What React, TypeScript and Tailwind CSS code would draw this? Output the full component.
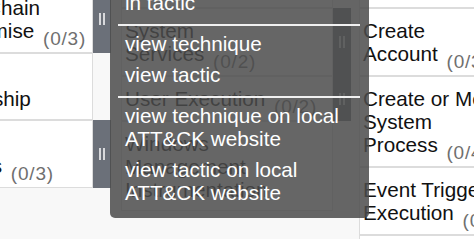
import React from "react";

type Technique = {
  name: string;
  count?: string;
  sub?: boolean;
};

type Column = {
  width: string;
  offset: string;
  items: Technique[];
};

const columns: Column[] = [
  {
    width: "w-[180px]",
    offset: "mt-[-15px]",
    items: [
      { name: "Supply Chain Compromise", count: "(0/3)", sub: true },
      { name: "Trusted Relationship" },
      { name: "Valid Accounts", count: "(0/3)", sub: true },
    ],
  },
  {
    width: "w-[212px]",
    offset: "mt-[-59px] ml-[10px]",
    items: [
      { name: "Software Deployment Tools" },
      { name: "System Services", count: "(0/2)", sub: true },
      { name: "User Execution", count: "(0/2)", sub: true },
      { name: "Windows Management Instrumentation" },
    ],
  },
  {
    width: "w-[191px]",
    offset: "mt-[-59px] ml-[8px]",
    items: [
      { name: "Compromise Client Software Binary" },
      { name: "Create Account", count: "(0/3)", sub: true },
      { name: "Create or Modify System Process", count: "(0/4)", sub: true },
      { name: "Event Triggered Execution", count: "(0/15)", sub: true },
      { name: "External Remote Services" },
    ],
  },
];

function Name({ name, count }: { name: string; count?: string }) {
  if (!count) return <>{name}</>;
  // keep the last word and the count together, as the matrix does
  const i = name.lastIndexOf(" ");
  const head = name.slice(0, i + 1);
  const last = name.slice(i + 1);
  return (
    <>
      {head}
      <span className="whitespace-nowrap">
        {last}{" "}
        <span className="relative top-[7px] ml-[3px] text-[19px] tracking-[0.8px] text-[#6f6f6f]">
          {count}
        </span>
      </span>
    </>
  );
}

function Sidebar() {
  return (
    <div className="flex w-[18px] items-center justify-center gap-[2px] bg-[#6b7079]">
      <span className="h-[12px] w-[2px] bg-[#d8d9dc]" />
      <span className="h-[12px] w-[2px] bg-[#d8d9dc]" />
    </div>
  );
}

function TechniqueCell({ t, width }: { t: Technique; width: string }) {
  return (
    <div className="flex">
      <div
        className={`${width} border border-[#dcdcdc] bg-white py-[9.5px] pl-[3px] pr-[6px] text-[20.7px] leading-[23px] text-[#111]`}
      >
        <Name name={t.name} count={t.count} />
      </div>
      {t.sub ? <Sidebar /> : <div className="w-[18px]" />}
    </div>
  );
}

const menu: (string | null)[] = [
  "deselect all techniques in tactic",
  null,
  "view technique",
  "view tactic",
  null,
  "view technique on local ATT&CK website",
  "view tactic on local ATT&CK website",
];

function ContextMenu() {
  return (
    <div className="absolute left-[110px] top-[-44px] w-[259px] rounded-[5px] bg-[rgba(75,75,75,0.85)] pt-[8px] pb-[9.5px] text-[20.7px] leading-[23px] text-white">
      {menu.map((label, i) =>
        label === null ? (
          <div key={i} className="mb-[2px] ml-[8px] mr-[9px] mt-[6px] h-[2px] bg-[#f0f0f0]" />
        ) : (
          <div key={i} className="cursor-pointer py-[4px] pl-[15px] pr-[24px]">
            {label}
          </div>
        ),
      )}
    </div>
  );
}

export default function App() {
  return (
    <div className="relative h-[239px] w-[474px] overflow-hidden bg-[#f8f8f8] font-['Liberation_Sans',Arial,sans-serif]">
      <div className="ml-[-87px] flex items-start">
        {columns.map((col, i) => (
          <div key={i} className={`flex shrink-0 flex-col ${col.offset}`}>
            {col.items.map((t) => (
              <TechniqueCell key={t.name} t={t} width={col.width} />
            ))}
          </div>
        ))}
      </div>
      <ContextMenu />
    </div>
  );
}
